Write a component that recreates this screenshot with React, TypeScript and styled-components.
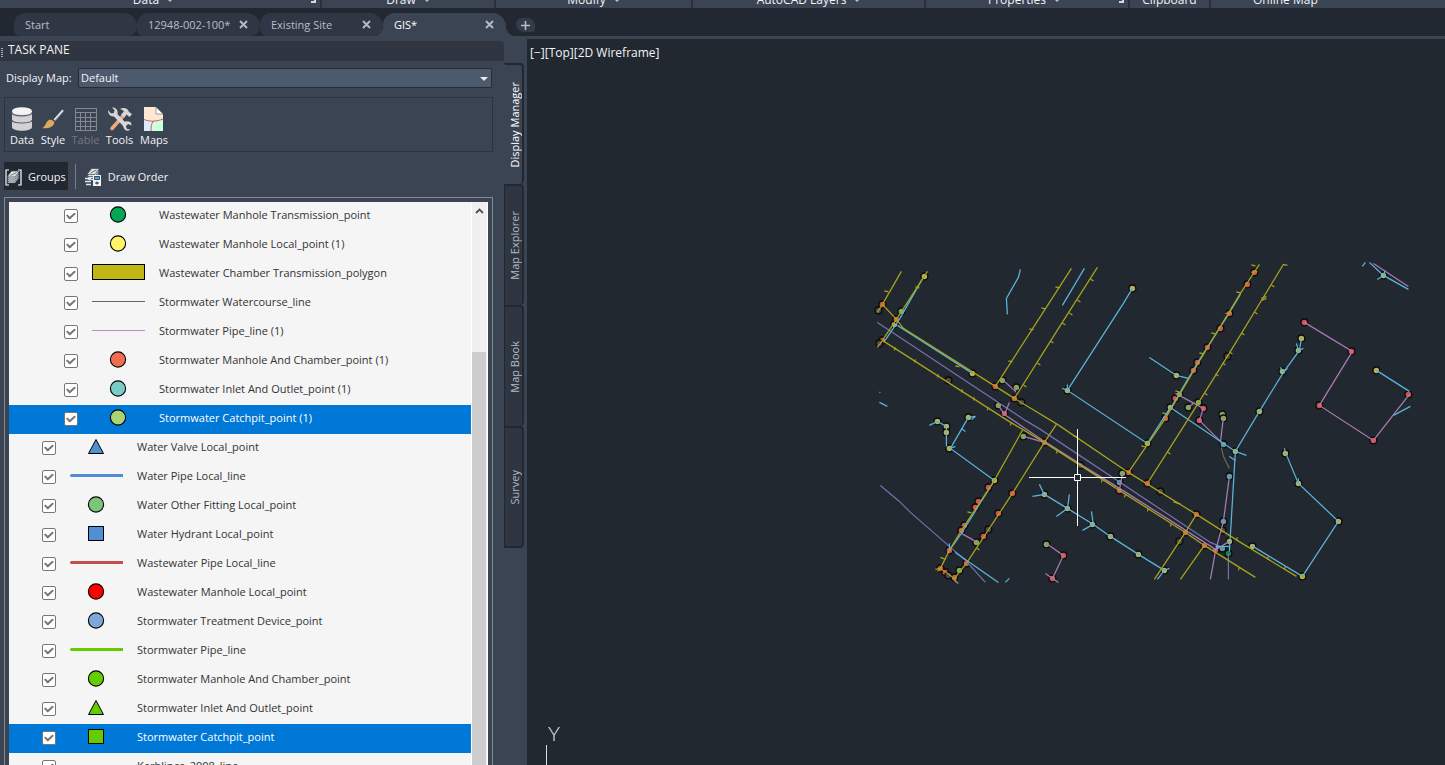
import React from "react";
import styled, { createGlobalStyle } from "styled-components";

const c = {
  panel: "#3b4453",
  dark: "#222831",
  title: "#2f3541",
  line: "#2b313c",
  canvas: "#212830",
  text: "#f2f3f5",
  yellow: "#a9a31d",
  blue: "#5bb4dc",
  purple: "#766fae",
  pink: "#a87bb3",
};

const GlobalStyle = createGlobalStyle`
  * { box-sizing: border-box; }
  html, body, #root { height: 100%; margin: 0; }
  body { overflow: hidden; background: ${c.panel}; color: ${c.text}; font: 11px/16px "Open Sans", "Noto Sans", sans-serif; }
  button, select { font: inherit; color: inherit; background: none; border: 0; padding: 0; margin: 0; }
`;

const Page = styled.div`
  display: flex;
  flex-direction: column;
  height: 100vh;
`;

const Ribbon = styled.div`
  display: flex;
  flex: none;
  height: 8px;
  overflow: hidden;
  background: ${c.panel};
  font-size: 12px;
`;

const RibbonPanel = styled.div<{ $width?: number; $shift?: number; $last?: boolean }>`
  display: flex;
  flex: ${(p) => (p.$width ? `0 0 ${p.$width}px` : "1")};
  align-items: flex-end;
  justify-content: ${(p) => (p.$last ? "flex-start" : "center")};
  padding-left: ${(p) => (p.$last ? 42 : 0)}px;
  padding-right: ${(p) => p.$shift || 0}px;
  gap: 8px;
  height: 8px;
  position: relative;
  border-right: ${(p) => (p.$last ? 0 : 2)}px solid ${c.line};
  span { line-height: 16px; }
`;

const Caret = styled.i`
  border: 3px solid transparent;
  border-top-color: #b8bdc6;
  margin-bottom: 3px;
  height: 6px;
`;

const Launcher = styled.i`
  position: absolute;
  right: 4px;
  bottom: 5px;
  width: 5px;
  height: 5px;
  border: solid #d5d8dd;
  border-width: 0 2px 2px 0;
`;

const TabBar = styled.nav`
  display: flex;
  flex: none;
  align-items: flex-end;
  height: 28px;
  padding-left: 14px;
  background: ${c.dark};
`;

const FileTab = styled.div<{ $active?: boolean }>`
  position: relative;
  display: flex;
  align-items: center;
  justify-content: space-between;
  width: 123px;
  height: 23px;
  padding: 0 12px 0 11px;
  border-radius: 12px 14px ${(p) => (p.$active ? "0 0" : "10px 6px")};
  background: ${(p) => (p.$active ? c.panel : "#2f3744")};
  color: ${(p) => (p.$active ? "#fff" : "#b9bec7")};
  &::before, &::after {
    content: "";
    display: ${(p) => (p.$active ? "block" : "none")};
    position: absolute;
    bottom: 0;
    width: 10px;
    height: 14px;
  }
  &::before { left: -9px; background: radial-gradient(ellipse at 0 0, transparent 70%, ${c.panel} 72%); }
  &::after { right: -9px; background: radial-gradient(ellipse at 100% 0, transparent 70%, ${c.panel} 72%); }
  a { color: inherit; text-decoration: none; white-space: nowrap; }
`;

const CloseButton = styled.button`
  display: flex;
  svg { display: block; }
`;

const NewTab = styled.button`
  display: flex;
  align-items: center;
  justify-content: center;
  width: 19px;
  height: 14px;
  margin: 0 0 4px 10px;
  border-radius: 7px 9px 4px 9px;
  background: #343c49;
`;

const Main = styled.main`
  display: flex;
  flex: 1;
  min-height: 0;
`;

const Sidebar = styled.aside`
  display: flex;
  flex: none;
  width: 527px;
  padding-top: 5px;
`;

const Pane = styled.section`
  display: flex;
  flex-direction: column;
  width: 504px;
`;

const PaneTitle = styled.h1`
  display: flex;
  align-items: center;
  gap: 5px;
  flex: none;
  height: 20px;
  margin: 0 0 7px;
  padding: 0 0 2px 1px;
  border-radius: 0 4px 0 0;
  background: ${c.title};
  font-size: 12px;
  font-weight: 400;
`;

const Grip = styled.i`
  width: 2px;
  height: 9px;
  margin-top: 4px;
  background: repeating-linear-gradient(#aab0ba 0 1px, transparent 1px 2px);
`;

const MapField = styled.div`
  position: relative;
  display: flex;
  align-items: center;
  flex: none;
  height: 20px;
  padding: 0 12px 0 6px;
  label { width: 72px; white-space: nowrap; }
  svg { position: absolute; right: 16px; top: 9px; pointer-events: none; }
`;

const MapSelect = styled.select`
  flex: 1;
  height: 20px;
  padding: 0 2px;
  appearance: none;
  border: 1px solid #262c36;
  border-radius: 2px;
  background: #4d596d;
`;

const ToolBar = styled.div`
  display: flex;
  flex: none;
  gap: 2px;
  height: 55px;
  margin: 9px 11px 0 4px;
  padding: 8px 3px 0;
  border: 1px solid #2d333f;
`;

const ToolButton = styled.button<{ $width: number }>`
  display: flex;
  flex-direction: column;
  align-items: center;
  width: ${(p) => p.$width}px;
  height: 44px;
  white-space: nowrap;
  &:disabled { color: #727780; }
`;

const ModeBar = styled.div`
  display: flex;
  align-items: center;
  flex: none;
  height: 28px;
  margin: 10px 0 0 4px;
`;

const ModeButton = styled.button<{ $active?: boolean }>`
  display: flex;
  align-items: center;
  gap: 6px;
  height: 28px;
  padding: 2px 2px 0 1px;
  background: ${(p) => (p.$active ? c.dark : "none")};
`;

const ModeDivider = styled.i`
  width: 1px;
  height: 25px;
  margin: 0 8px 0 7px;
  background: #7b7f85;
`;

const ListFrame = styled.div`
  display: flex;
  flex: 1;
  min-height: 0;
  margin: 7px 11px 0 4px;
  padding: 4px 4px 0;
  border: 1px solid #85898f;
  border-bottom: 0;
`;

const LayerList = styled.ul`
  flex: 1;
  margin: 0;
  padding: 0;
  overflow: hidden;
  list-style: none;
  background: #f5f5f5;
  border-right: 1px solid #fff;
`;

const LayerRow = styled.li<{ $nested?: boolean; $selected?: boolean }>`
  display: flex;
  align-items: center;
  height: 29px;
  padding-left: ${(p) => (p.$nested ? 55 : 33)}px;
  background: ${(p) => (p.$selected ? "#0078d7" : "transparent")};
  color: ${(p) => (p.$selected ? "#fff" : "#333")};
  svg { flex: none; margin: 0 14px 4px 13px; }
  label { padding-bottom: 3px; white-space: nowrap; }
`;

const Check = styled.input`
  appearance: none;
  position: relative;
  flex: none;
  width: 14px;
  height: 14px;
  margin: 0 0 1px;
  border: 1px solid #777;
  border-radius: 2px;
  background: #fff;
  &:checked::after {
    content: "";
    position: absolute;
    inset: 2px 1px;
    background: #777;
    clip-path: polygon(0 45%, 15% 30%, 38% 58%, 82% 8%, 100% 22%, 42% 92%, 32% 92%);
  }
`;

const Scrollbar = styled.div`
  display: flex;
  flex-direction: column;
  flex: none;
  width: 16px;
  padding-right: 1px;
  background: #f0f0f0;
  border-right: 1px solid #fff;
`;

const ScrollUp = styled.button`
  display: flex;
  align-items: center;
  justify-content: center;
  height: 18px;
`;

const ScrollThumb = styled.div`
  flex: 1;
  margin-top: 132px;
  background: #cdcdcd;
`;

const SideTabs = styled.div`
  display: flex;
  flex-direction: column;
  width: 20px;
  padding-top: 22px;
`;

const SideTab = styled.button<{ $active?: boolean }>`
  height: 121px;
  padding-left: 2px;
  border: solid ${c.dark};
  border-width: 2px 2px 0 1px;
  border-left-color: ${(p) => (p.$active ? c.panel : c.dark)};
  border-radius: 0 4px 4px 0;
  background: ${(p) => (p.$active ? c.panel : c.title)};
  color: ${(p) => (p.$active ? "#fff" : "#b3b8c0")};
  &:last-child { height: 122px; border-bottom-width: 2px; }
  span {
    display: block;
    width: 15px;
    line-height: 15px;
    writing-mode: vertical-rl;
    transform: rotate(180deg);
    margin: 0 auto;
  }
`;

const Viewport = styled.section`
  position: relative;
  flex: 1;
  min-width: 0;
  margin-top: 3px;
  overflow: hidden;
  background: ${c.canvas};
`;

const ViewLabel = styled.div`
  position: absolute;
  left: 3px;
  top: 6px;
  font-size: 12px;
  white-space: pre;
`;

const Drawing = styled.svg`
  display: block;
  width: 100%;
  height: 100%;
`;

const ribbon = [
  { name: "Data", width: 322, shift: 14, arrow: true, launch: true },
  { name: "Draw", width: 174, shift: 0, arrow: true },
  { name: "Modify", width: 197, shift: 0, arrow: true },
  { name: "AutoCAD Layers", width: 233, shift: 0, arrow: true },
  { name: "Properties", width: 204, shift: 6, arrow: true, launch: true },
  { name: "Clipboard", width: 81, shift: 0 },
];

type Kind = "circle" | "rect" | "square" | "triangle" | "thin" | "thick";
type Layer = { name: string; kind: Kind; color: string; nested?: boolean; selected?: boolean };

const layers: Layer[] = [
  { name: "Wastewater Manhole Transmission_point", kind: "circle", color: "#00a651", nested: true },
  { name: "Wastewater Manhole Local_point (1)", kind: "circle", color: "#fff467", nested: true },
  { name: "Wastewater Chamber Transmission_polygon", kind: "rect", color: "#beb715", nested: true },
  { name: "Stormwater Watercourse_line", kind: "thin", color: "#6e625e", nested: true },
  { name: "Stormwater Pipe_line (1)", kind: "thin", color: "#bd8cc5", nested: true },
  { name: "Stormwater Manhole And Chamber_point (1)", kind: "circle", color: "#f26c4f", nested: true },
  { name: "Stormwater Inlet And Outlet_point (1)", kind: "circle", color: "#7accc8", nested: true },
  { name: "Stormwater Catchpit_point (1)", kind: "circle", color: "#acd373", nested: true, selected: true },
  { name: "Water Valve Local_point", kind: "triangle", color: "#538ed5" },
  { name: "Water Pipe Local_line", kind: "thick", color: "#538ed5" },
  { name: "Water Other Fitting Local_point", kind: "circle", color: "#7cc576" },
  { name: "Water Hydrant Local_point", kind: "square", color: "#538ed5" },
  { name: "Wastewater Pipe Local_line", kind: "thick", color: "#c0504d" },
  { name: "Wastewater Manhole Local_point", kind: "circle", color: "#ff0000" },
  { name: "Stormwater Treatment Device_point", kind: "circle", color: "#7da7d9" },
  { name: "Stormwater Pipe_line", kind: "thick", color: "#66cc00" },
  { name: "Stormwater Manhole And Chamber_point", kind: "circle", color: "#66cc00" },
  { name: "Stormwater Inlet And Outlet_point", kind: "triangle", color: "#66cc00" },
  { name: "Stormwater Catchpit_point", kind: "square", color: "#66cc00", selected: true },
  { name: "Kerblines_2008_line", kind: "thin", color: "#6e625e" },
];

function Symbol({ kind, color }: { kind: Kind; color: string }) {
  return (
    <svg width="54" height="17" viewBox="0 0 54 17" aria-hidden="true">
      {kind === "circle" && <circle cx="27" cy="8.5" r="7.6" fill={color} stroke="#000" strokeWidth="1.1" />}
      {kind === "rect" && <rect x="1.5" y="0.5" width="52" height="15" fill={color} stroke="#000" />}
      {kind === "square" && <rect x="19.5" y="1.5" width="15" height="14" fill={color} stroke="#000" />}
      {kind === "triangle" && <path d="M27 1.5 19.5 15.5h15z" fill={color} stroke="#000" />}
      {kind === "thin" && <path d="M1 8.5h53" stroke={color} />}
      {kind === "thick" && <path d="M2.5 8.5h51" stroke={color} strokeWidth="3" strokeLinecap="round" />}
    </svg>
  );
}

const DataIcon = () => (
  <svg width="24" height="26" viewBox="0 0 24 26">
    <path d="M2 5v16c0 5 20 5 20 0V5z" fill="#d2d2d2" />
    <ellipse cx="12" cy="5" rx="10" ry="3.8" fill="#f4f4f4" />
    <path d="M2 6.5c0 4.5 20 4.5 20 0M2 14c0 4 20 4 20 0" fill="none" stroke="#59606c" strokeWidth="1.2" />
  </svg>
);
const StyleIcon = () => (
  <svg width="24" height="26" viewBox="0 0 24 26">
    <path d="M22 4.5 12 16" stroke="#9aa0a6" strokeWidth="2.4" />
    <path d="M22 4 13 14" stroke="#e6e8ea" strokeWidth="1.2" />
    <path d="M1 22c4-1 3-6 7-8 3-1 6 2 5 4-2 4-7 5-12 4z" fill="#d9a964" />
    <path d="m10 12 4.5 4" stroke="#4c4540" strokeWidth="1.4" />
  </svg>
);
const TableIcon = () => (
  <svg width="24" height="26" viewBox="0 0 24 26" fill="none" stroke="#858a92">
    <path d="M1.500 2.500h21v22h-21zM1.500 6.500h21M1.500 11.500h21M1.500 15.500h21M1.500 20.500h21M6.500 6.500v18M11.500 6.500v18M16.500 6.500v18" />
  </svg>
);
const ToolsIcon = () => (
  <svg width="26" height="26" viewBox="0 0 26 26">
    <path d="M5 22.500 17 9" stroke="#f0a878" strokeWidth="3.600" strokeLinecap="round" />
    <path d="M13 3c4-2 8-.5 9 3l3 2-2.500 3-3-2.500-2.500 3-3-3 3-3c-1-1-2-2-4-2.500z" fill="#d7d7d7" />
    <path d="M7 7.500 19 20" stroke="#d7d7d7" strokeWidth="4" />
    <path d="M1 4l3 3.500 3-.5.500-3L5 1.500C9 1 12 5 10 9c-4 3-9 1-9-5zM16 19c0-4 4-5 8-2.500l.5 3-3.500-1.500-2.200 2 1.200 3 3.500.5c-4 3-7 0-7.500-4.500z" fill="#d7d7d7" />
  </svg>
);
const MapsIcon = () => (
  <svg width="24" height="26" viewBox="0 0 24 26">
    <path d="M2 1h12l7 7v17H2z" fill="#ffe6d5" />
    <path d="M2 14c3 1 6 2 9 1l-3 10H2z" fill="#d9edff" />
    <path d="M11 15c4 0 7-1 10-2v12H9c0-4 0-7 2-10z" fill="#cdffdc" />
    <path d="M2 13.500c6 2.500 13 2 19-.5M11.500 15C9 18 9 21 9 25" fill="none" stroke="#d05a68" />
    <path d="M14 1l7 7h-7z" fill="#fff" stroke="#59606c" strokeWidth=".6" />
  </svg>
);
const Stack = () => (
  <g fill="#dfe1e4" stroke="#3b4453" strokeWidth=".7">
    {[6, 4, 2, 0].map((dy) => <path key={dy} d={`M6.500 ${2 + dy}h8l-4.500 6h-8z`} />)}
    <path d="M5.500 6.500 11.500 3.500" />
  </g>
);
const GroupsIcon = () => (
  <svg width="17" height="17" viewBox="0 0 17 17">
    <Stack />
    <path d="M4 1H1v15h3M13 1h3v15h-3" fill="none" stroke="#fff" strokeWidth="1.200" />
  </svg>
);
const OrderIcon = () => (
  <svg width="17" height="18" viewBox="0 0 17 18">
    <g transform="translate(0 -1.500)"><Stack /></g>
    <path d="M0 10.500h6M0 13.500h6M1 16.500h5" stroke="#dfe1e4" strokeWidth="1.300" />
    <path d="M8 7h8v11H8z" fill="#f2f3f5" />
    <path d="M9.500 8.500h5v3h-5z" fill="#4aa3ee" stroke="#222831" strokeWidth=".8" />
    <path d="M10 15h4M12 13.500v3" stroke="#222831" />
  </svg>
);

const tools = [
  { name: "Data", Icon: DataIcon, width: 28 },
  { name: "Style", Icon: StyleIcon, width: 30 },
  { name: "Table", Icon: TableIcon, width: 31, disabled: true },
  { name: "Tools", Icon: ToolsIcon, width: 33 },
  { name: "Maps", Icon: MapsIcon, width: 32 },
];

const lines: [string, string[]][] = [
  [c.purple, ["877,322 1025,420 1040,429 1210,542 1222,547", "1228,553 1228,579", "880,485 899,501 910,512 949,546 965,560 985,582"]],
  [
    c.pink,
    [
      "1003,380 1015,391 1016,387", "1009,402 1004,414 998,405", "1004,414 1044,441 1085,467 1124,491 1176,524 1215,549",
      "1023,436 1044,442", "961,533 977,542", "1046,543 1063,555 1052,578", "1045,573 1058,582", "952,578 958,583",
      "1122,473 1119,490", "1304,322 1352,351 1319,405 1373,440 1409,394", "1373,263 1408,286",
      "1175,393 1203,408 1199,420 1222,443", "1188,407 1194,402", "1223,417 1220,442", "1229,476 1223,521 1215,551 1210,579",
      "1229,541 1214,550",
    ],
  ],
  ["#6b625c", ["1221,447 1223,456 1229,468"]],
  [
    c.blue,
    [
      "1020,269 1018,277 1006,298 1007,314", "1084,268 1062,305", "897,325 972,373", "924,275 899,319 884,341", "879,392 880,392",
      "879,402 887,406", "1132,288 1123,303 1067,390 1147,443 1170,407", "1062,388 1067,390 1067,384", "1149,357 1176,375 1188,378",
      "1170,407 1235,451 1259,411 1283,372 1299,350 1301,338", "1235,451 1246,455", "1229,456 1235,460", "1235,451 1229,551",
      "1296,343 1298,350 1303,348", "1280,367 1283,372 1287,368", "1362,266 1365,262", "1369,262 1383,275 1408,289", "1377,279 1383,275 1385,270",
      "1376,370 1409,391", "1393,415 1410,406", "929,425 937,421 946,426 946,446", "968,417 950,448 994,480", "968,417 975,416 971,419", "961,428 965,431", "950,448 955,446",
      "994,480 961,533 947,553", "955,552 998,582", "1005,582 1009,578", "949,543 949,550", "1039,484 1044,494 1032,496", "1044,494 1067,508 1093,524 1110,536 1138,554 1164,570",
      "1067,508 1069,494", "1067,508 1056,516", "1093,524 1091,511", "1093,524 1082,530", "1157,579 1164,570 1169,568",
      "1284,448 1285,452 1298,483 1338,521 1302,576 1251,545", "1298,478 1298,483", "1215,546 1229,546", "1217,549 1217,545", "1240,294 1228,314 1198,361 1166,415",
    ],
  ],
  [
    c.yellow,
    [
      "901,271 882,304 896,319 903,328 995,386 1014,398 1057,424 1128,472 1196,514 1240,542 1296,576",
      "882,304 877,312", "927,271 896,319 882,340 877,347", "882,340 1007,420 1044,442 1080,465 1119,490 1185,532 1204,545 1255,577",
      "995,386 1071,268", "1014,398 1060,325 1097,267", "1128,472 1165,418 1200,359 1240,293 1259,264", "1147,483 1187,420 1227,356 1283,264 1287,265",
      "1022,430 994,480 961,530 949,550 940,568 954,578 966,563 1012,493 1044,442 1056,424", "1196,514 1185,532 1154,579", "1204,545 1180,579",
      "935,569 940,568 937,571", "940,557 945,559", "954,578 956,582", "1299,574 1304,577",
    ],
  ],
];

// Flow marks along the wastewater pipes, one list for each side of the line.
const leftTicks = [[887,291],[918,287],[1044,308],[1032,329],[1011,361],[1058,287],[1239,292],[1214,333],[1202,353],[1178,391],[1165,413],[1144,446],[970,512],[958,366],[1076,436],[1176,502],[1179,503],[1254,265]];
const rightTicks = [[1091,279],[1078,300],[1070,313],[1063,323],[1051,341],[1038,363],[1024,385],[1272,285],[1255,312],[1242,333],[1230,352],[1223,363],[1216,374],[1205,393],[1168,452],[977,548]];
const downTicks = [[894,348],[914,360],[937,375],[961,390],[973,398],[987,408],[1010,423],[1056,451],[1101,480],[1124,495],[1147,509],[1170,524],[1238,568]];

const dotColors = { y: "#b9b052", r: "#d4524e", g: "#82a858", b: "#4f4541", t: "#5f9ea0", e: "#13804a" };
const dots: Record<keyof typeof dotColors, number[][]> = {
  y: [[924,276],[894,324],[972,373],[937,421],[946,426],[946,432],[968,417],[949,448],[994,480],[1132,288],[1067,390],[1176,375],[1170,407],[1147,443],[1235,451],[1301,338],[1298,350],[1282,371],[1259,411],[1383,275],[1376,370],[1044,494],[1067,508],[1092,524],[1110,536],[1138,554],[1164,570],[1285,453],[1298,483],[1338,521],[1302,576],[1252,546],[1229,541]],
  r: [[882,304],[896,319],[882,340],[995,386],[1014,398],[1004,413],[1044,442],[988,487],[978,501],[975,507],[964,525],[961,530],[949,550],[940,568],[945,572],[954,577],[966,563],[983,536],[998,513],[1012,493],[1128,472],[1119,490],[1147,483],[1196,514],[1185,532],[1204,545],[1215,550],[1165,418],[1175,398],[1193,370],[1197,362],[1207,347],[1220,328],[1229,313],[1247,284],[1254,272],[1203,408],[1199,420],[1304,322],[1351,351],[1319,405],[1373,440],[1408,394],[1063,555],[1052,578]],
  g: [[901,311],[1002,380],[1016,387],[998,405],[1023,436],[976,542],[959,570],[1046,544],[1122,473],[1179,394],[1188,407],[1198,402],[1222,414],[1223,418]],
  b: [[878,310],[879,343],[948,380],[1021,402],[988,529],[948,575],[1080,465],[1160,491],[1179,541],[1222,530],[1227,356]],
  t: [[1223,444],[1229,476],[1223,521],[1222,548],[1119,482]],
  e: [[1228,553]],
};

function MapDrawing() {
  return (
    <Drawing viewBox="527 39 918 726" preserveAspectRatio="xMinYMin slice" role="img" aria-label="GIS network drawing">
      <g transform="translate(.4 .4)">
      {(Object.keys(dots) as (keyof typeof dotColors)[]).map((k) =>
        dots[k].map(([x, y], i) => (
          <circle key={k + i} cx={x} cy={y} r="3.400" fill={dotColors[k]} stroke="#0a0b0c" strokeWidth="1.300" />
        )),
      )}
      {lines.map(([color, list]) =>
        list.map((points) => <polyline key={points} points={points} fill="none" stroke={color} strokeWidth="1.250" />),
      )}
      <g stroke={c.yellow} strokeWidth="1.200">
        {leftTicks.map(([x, y], i) => <path key={i} d={`M${x + 1} ${y + 0.5}l-4-1`} />)}
        {rightTicks.map(([x, y], i) => <path key={i} d={`M${x - 1} ${y - 0.5}l3 2`} />)}
        {downTicks.map(([x, y], i) => <path key={i} d={`M${x + 1} ${y - 1}l-1 3`} />)}
        <path d="M1261 298l5-2M1261 300l5-2M1251 272l6-1M1225 313l6 0M1236 540l1-3M1267 559l1-3M1284 569l1-3" />
      </g>
      </g>
      <path d="M1029 477.500h45M1081 477.500h45M1077.500 429v45M1077.500 481v45M1074.500 474.500h6v6h-6z" fill="none" stroke="#fff" />
      <path d="M546.500 745v20" stroke="#d9dbde" />
      <text x="548" y="741" fill="#e4e6e8" fontSize="20" fontFamily="Lato, sans-serif" fontWeight="300">Y</text>
    </Drawing>
  );
}

const Close = ({ name }: { name: string }) => (
  <CloseButton aria-label={`Close ${name}`}>
    <svg width="9" height="9" viewBox="0 0 9 9"><path d="m1 1 7 7M8 1 1 8" stroke="#b4b8bf" strokeWidth="2" /></svg>
  </CloseButton>
);

export default function App() {
  return (
    <Page>
      <GlobalStyle />
      <Ribbon>
        {ribbon.map((r) => (
          <RibbonPanel key={r.name} $width={r.width} $shift={r.shift}>
            <span>{r.name}</span>
            {r.arrow && <Caret />}
            {r.launch && <Launcher />}
          </RibbonPanel>
        ))}
        <RibbonPanel $last><span>Online Map</span></RibbonPanel>
      </Ribbon>
      <TabBar>
        <FileTab><a href="#start">Start</a></FileTab>
        {["12948-002-100*", "Existing Site", "GIS*"].map((name) => (
          <FileTab key={name} $active={name === "GIS*"}>
            <a href="#drawing">{name}</a>
            <Close name={name} />
          </FileTab>
        ))}
        <NewTab aria-label="New drawing">
          <svg width="9" height="9" viewBox="0 0 9 9"><path d="M0 4.500h9M4.500 0v9" stroke="#b9bdc4" strokeWidth="1.600" /></svg>
        </NewTab>
      </TabBar>
      <Main>
        <Sidebar>
          <Pane>
            <PaneTitle><Grip />TASK PANE</PaneTitle>
            <MapField>
              <label htmlFor="display-map">Display Map:</label>
              <MapSelect id="display-map"><option>Default</option></MapSelect>
              <svg width="8" height="4" viewBox="0 0 8 4"><path d="M0 0h8L4 4z" fill="#e8eaed" /></svg>
            </MapField>
            <ToolBar>
              {tools.map(({ name, Icon, width, disabled }) => (
                <ToolButton key={name} $width={width} disabled={disabled}><Icon />{name}</ToolButton>
              ))}
            </ToolBar>
            <ModeBar>
              <ModeButton $active><GroupsIcon />Groups</ModeButton>
              <ModeDivider />
              <ModeButton><OrderIcon />Draw Order</ModeButton>
            </ModeBar>
            <ListFrame>
              <LayerList>
                {layers.map((l, i) => (
                  <LayerRow key={l.name} $nested={l.nested} $selected={l.selected}>
                    <Check type="checkbox" id={`layer-${i}`} defaultChecked />
                    <Symbol kind={l.kind} color={l.color} />
                    <label htmlFor={`layer-${i}`}>{l.name}</label>
                  </LayerRow>
                ))}
              </LayerList>
              <Scrollbar>
                <ScrollUp aria-label="Scroll up">
                  <svg width="9" height="6" viewBox="0 0 9 6"><path d="m1 5 3.500-3.500L8 5" fill="none" stroke="#505050" strokeWidth="1.800" /></svg>
                </ScrollUp>
                <ScrollThumb />
              </Scrollbar>
            </ListFrame>
          </Pane>
          <SideTabs>
            {["Display Manager", "Map Explorer", "Map Book", "Survey"].map((name, i) => (
              <SideTab key={name} $active={i === 0}><span>{name}</span></SideTab>
            ))}
          </SideTabs>
        </Sidebar>
        <Viewport>
          <MapDrawing />
          <ViewLabel>[−][Top][2D Wireframe]</ViewLabel>
        </Viewport>
      </Main>
    </Page>
  );
}
